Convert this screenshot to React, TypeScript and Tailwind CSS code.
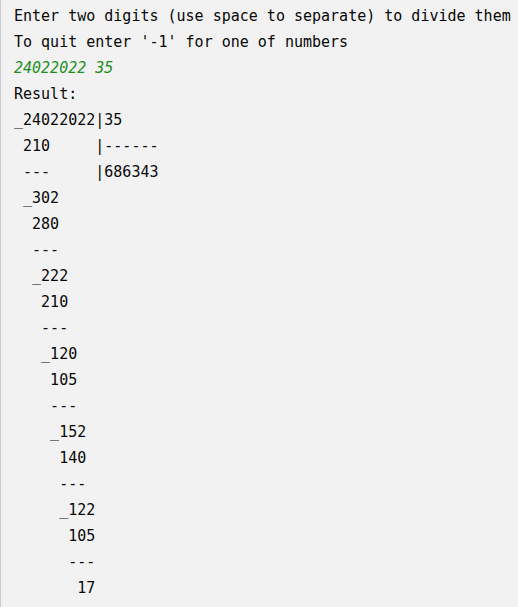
import React from "react";

const lines: { text: string; input?: boolean }[] = [
  { text: "Enter two digits (use space to separate) to divide them" },
  { text: "To quit enter '-1' for one of numbers" },
  { text: "24022022 35", input: true },
  { text: "Result:" },
  { text: "_24022022|35" },
  { text: " 210     |------" },
  { text: " ---     |686343" },
  { text: " _302" },
  { text: "  280" },
  { text: "  ---" },
  { text: "  _222" },
  { text: "   210" },
  { text: "   ---" },
  { text: "   _120" },
  { text: "    105" },
  { text: "    ---" },
  { text: "    _152" },
  { text: "     140" },
  { text: "     ---" },
  { text: "     _122" },
  { text: "      105" },
  { text: "      ---" },
  { text: "       17" },
];

export default function App() {
  return (
    <div className="w-[518px] h-[607px] overflow-hidden bg-[#f2f2f2] border-l border-[#c9cdd3]">
      <pre className="pl-[13px] pt-[3px] font-['DejaVu_Sans_Mono',monospace] text-[15px] leading-[26px] text-[#080808]">
        {lines.map((l, i) => (
          <div key={i} className={l.input ? "italic text-[#1b8f1b]" : ""}>
            {l.text}
          </div>
        ))}
      </pre>
    </div>
  );
}
